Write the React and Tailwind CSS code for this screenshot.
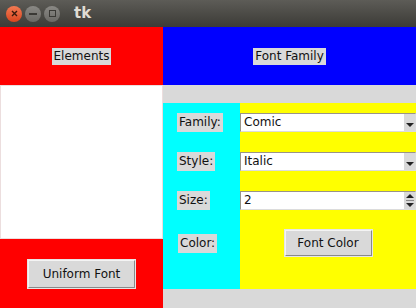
export default function App() {
  const Label = ({ children, className = "" }) => (
    <div className={"bg-[#d9d9d9] px-[2px] text-[12px] leading-[19px] h-[19px] text-[#111] " + className}>
      {children}
    </div>
  );
  const Entry = ({ value, spin }) => (
    <div className="w-full h-[19px] bg-white border border-t-[#9a9488] border-l-[#9a9488] border-b-[#dcdcdc] border-r-[#dcdcdc] flex items-center">
      <span className="pl-[3px] text-[12px] leading-[17px] text-[#111] flex-1">{value}</span>
      {spin ? (
        <div className="w-[11px] h-[17px] bg-[#d9d9d9] flex flex-col items-center justify-center gap-[1px]">
          <svg width="8" height="6" viewBox="0 0 8 6"><path d="M0 5 L4 1 L8 5 Z" fill="#222" /></svg>
          <div className="w-[8px] h-[1px] bg-[#888]" />
          <svg width="8" height="6" viewBox="0 0 8 6"><path d="M0 1 L4 5 L8 1 Z" fill="#222" /></svg>
        </div>
      ) : (
        <div className="w-[11px] h-[17px] bg-[#d9d9d9] flex items-end justify-center pb-[3px]">
          <svg width="8" height="5" viewBox="0 0 8 5"><path d="M0 0 L4 4 L8 0 Z" fill="#222" /></svg>
        </div>
      )}
    </div>
  );
  const Button = ({ children, className = "" }) => (
    <div className={"bg-[#d9d9d9] border border-t-[#f4f4f4] border-l-[#f4f4f4] border-b-[#8a8a8a] border-r-[#8a8a8a] outline outline-1 outline-[#e6e6e6] flex items-center justify-center text-[12px] text-[#111] " + className}>
      {children}
    </div>
  );
  const cyan = "bg-[#00ffff] py-[10px] pl-[14px] flex items-center";
  const yellow = "bg-[#ffff00] py-[10px] flex items-center";
  return (
    <div className="w-[416px] h-[308px] overflow-hidden flex flex-col bg-[#d9d9d9] font-['DejaVu_Sans',sans-serif]">
      <div className="h-[27px] shrink-0 bg-gradient-to-b from-[#5d5c57] to-[#3c3b37] flex items-center pl-[6px]">
        <div className="w-[16px] h-[16px] rounded-full bg-gradient-to-b from-[#f27a52] to-[#d9441c] flex items-center justify-center">
          <svg width="7" height="7" viewBox="0 0 7 7"><path d="M1 1 L6 6 M6 1 L1 6" stroke="#3a1a0c" strokeWidth="1.4" /></svg>
        </div>
        <div className="ml-[3px] w-[16px] h-[16px] rounded-full bg-gradient-to-b from-[#8a8985] to-[#6a6965] flex items-center justify-center">
          <div className="w-[8px] h-[2px] bg-[#3a3935]" />
        </div>
        <div className="ml-[3px] w-[16px] h-[16px] rounded-full bg-gradient-to-b from-[#8a8985] to-[#6a6965] flex items-center justify-center">
          <div className="w-[7px] h-[7px] border-[1.5px] border-[#3a3935]" />
        </div>
        <span className="ml-[14px] text-[15px] font-bold text-[#dfdbd2] leading-none">tk</span>
      </div>
      <div className="flex flex-1">
        <div className="w-[163px] shrink-0 flex flex-col">
          <div className="h-[58px] bg-[#ff0000] flex items-center justify-center">
            <div className="bg-[#d9d9d9] px-[2px] text-[12px] leading-[17px] h-[17px] text-[#111]">Elements</div>
          </div>
          <div className="h-[154px] bg-white border border-[#ecdede]" />
          <div className="flex-1 bg-[#ff0000] flex items-center justify-center">
            <Button className="w-[107px] h-[28px]">Uniform Font</Button>
          </div>
        </div>
        <div className="flex-1 flex flex-col">
          <div className="h-[58px] bg-[#0000ff] flex items-center justify-center">
            <div className="bg-[#d9d9d9] px-[2px] text-[12px] leading-[17px] h-[17px] text-[#111]">Font Family</div>
          </div>
          <div className="h-[18px]" />
          <div className="grid grid-cols-[77px_1fr] grid-rows-[auto_auto_auto_auto_1fr] h-[186px]">
            <div className={cyan}><Label>Family:</Label></div>
            <div className={yellow}><Entry value="Comic" /></div>
            <div className={cyan}><Label>Style:</Label></div>
            <div className={yellow}><Entry value="Italic" /></div>
            <div className={cyan}><Label>Size:</Label></div>
            <div className={yellow}><Entry value="2" spin /></div>
            <div className={cyan}><Label className="ml-[1px]">Color:</Label></div>
            <div className={yellow + " justify-center"}>
              <Button className="w-[87px] h-[26px]">Font Color</Button>
            </div>
            <div className="bg-[#00ffff]" />
            <div className="bg-[#ffff00]" />
          </div>
          <div className="flex-1" />
        </div>
      </div>
    </div>
  );
}
